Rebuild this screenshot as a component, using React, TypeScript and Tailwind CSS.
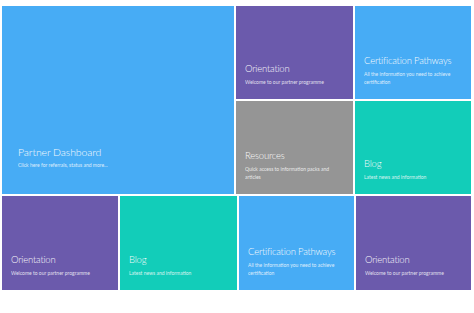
type Tile = {
  title: string
  text: string
  color: string
}

const top: Tile[] = [
  { title: 'Orientation', text: 'Welcome to our partner programme', color: 'bg-[#6b5aac]' },
  { title: 'Certification Pathways', text: 'All the information you need to achieve certification', color: 'bg-[#47acf5]' },
  { title: 'Resources', text: 'Quick access to information packs and articles', color: 'bg-[#959595]' },
  { title: 'Blog', text: 'Latest news and information', color: 'bg-[#12cdb9]' },
]

const bottom: Tile[] = [
  { title: 'Orientation', text: 'Welcome to our partner programme', color: 'bg-[#6b5aac]' },
  { title: 'Blog', text: 'Latest news and information', color: 'bg-[#12cdb9]' },
  { title: 'Certification Pathways', text: 'All the information you need to achieve certification', color: 'bg-[#47acf5]' },
  { title: 'Orientation', text: 'Welcome to our partner programme', color: 'bg-[#6b5aac]' },
]

function SmallTile({ tile }: { tile: Tile }) {
  return (
    <div className={`${tile.color} flex flex-col justify-end pl-[9px] pr-[12px] pb-[13px] text-white`}>
      <p className="whitespace-nowrap text-[9.5px] leading-[12px] font-light tracking-[-0.2px] opacity-95">{tile.title}</p>
      <p className="mt-[4px] text-[5px] leading-[7.5px] opacity-80">{tile.text}</p>
    </div>
  )
}

export default function App() {
  return (
    <div className="w-[474px] h-[313px] bg-white pl-[2px] pt-[6px] font-['Lato','Open_Sans',sans-serif]">
      <div className="grid grid-cols-[232px_117px_116px] grid-rows-[93px_93px] gap-[2px]">
        <div className="row-span-2 bg-[#47acf5] flex flex-col justify-end pl-[16px] pb-[25px] text-white">
          <p className="whitespace-nowrap text-[10.5px] leading-[13px] font-light tracking-[-0.1px] opacity-95">Partner Dashboard</p>
          <p className="mt-[3px] text-[5px] leading-[7.5px] opacity-80">Click here for referrals, status and more...</p>
        </div>
        {top.map((t, i) => (
          <SmallTile key={i} tile={t} />
        ))}
      </div>
      <div className="mt-[2px] grid grid-cols-[116px_117px_115px_115px] h-[94px] gap-[2px]">
        {bottom.map((t, i) => (
          <SmallTile key={i} tile={t} />
        ))}
      </div>
    </div>
  )
}
